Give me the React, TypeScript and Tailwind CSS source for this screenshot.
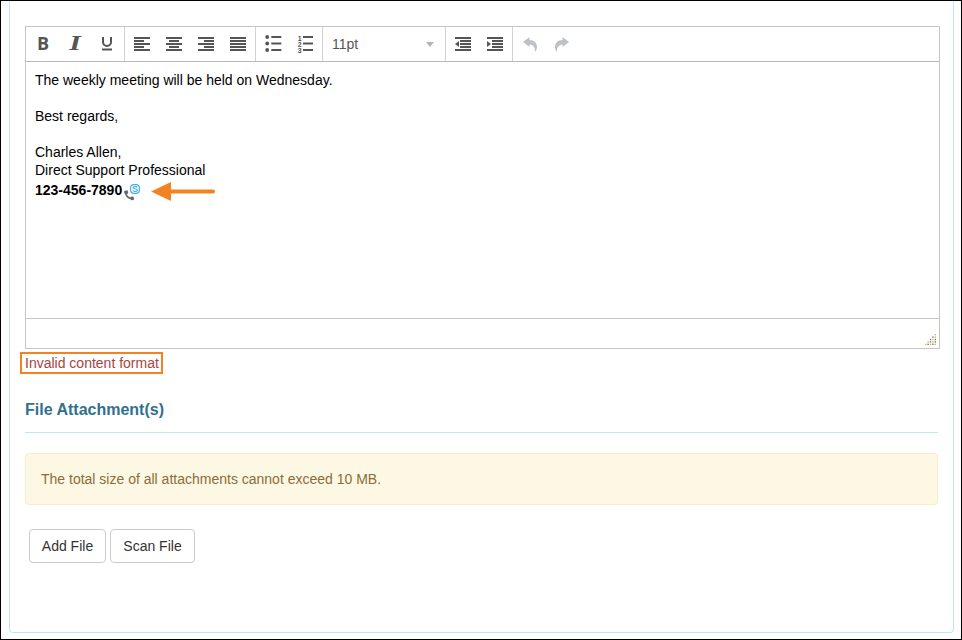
import React from "react";

const c = "#555555";
function Ico({ children }: { children: React.ReactNode }) {
  return (
    <div className="flex h-[34px] w-[32px] items-center justify-center">
      <svg width="20" height="20" viewBox="0 0 20 20" className="overflow-visible">{children}</svg>
    </div>
  );
}
function Lines({ rows }: { rows: [number, number, number][] }) {
  return (
    <>
      {rows.map(([x, y, w], i) => (
        <rect key={i} x={x} y={y} width={w} height="2" fill={c} />
      ))}
    </>
  );
}
function Group({ children }: { children: React.ReactNode }) {
  return <div className="flex px-px">{children}</div>;
}
const Sep = () => <div className="h-[34px] w-px bg-[#d0d0d0]" />;
const undo = "M3 8 9.5 3V6C14 6 17 9 17 13 17 15 16 17 15 18 15.5 14 13 10.5 9.5 10.5V13Z";

export default function App() {
  return (
    <div className="h-[640px] w-[962px] overflow-hidden border border-black bg-white font-['Liberation_Sans',Arial,sans-serif] text-sm text-black">
      <div className="ml-[8px] mr-[7px] h-[632px] rounded-b-[4px] border-x border-b border-[#bce8f1] pl-[15px] pr-[13px] pt-[25px]">
        <div className="w-[915px] border border-[#c5c5c5]">
          <div className="flex h-[35px] border-b border-[#b8b8b8]">
            <Group>
              <Ico><text x="10" y="16" textAnchor="middle" fontFamily="'Open Sans','Liberation Sans',sans-serif" fontWeight="700" fontSize="18" fill={c}>B</text></Ico>
              <Ico><text x="10" y="16" textAnchor="middle" fontFamily="'Liberation Serif',serif" fontStyle="italic" fontWeight="700" fontSize="20" fill={c} transform="matrix(1.5 0 0 1 -5 0)">I</text></Ico>
              <Ico>
                <path d="M6 3v5a4 4 0 0 0 8 0V3" fill="none" stroke={c} strokeWidth="2" />
                <rect x="5" y="14.5" width="10" height="2" fill={c} />
              </Ico>
            </Group>
            <Sep />
            <Group>
              <Ico><Lines rows={[[2, 3, 16], [2, 6, 10], [2, 9, 16], [2, 12, 10], [2, 15, 16]]} /></Ico>
              <Ico><Lines rows={[[2, 3, 16], [5, 6, 10], [2, 9, 16], [5, 12, 10], [2, 15, 16]]} /></Ico>
              <Ico><Lines rows={[[2, 3, 16], [8, 6, 10], [2, 9, 16], [8, 12, 10], [2, 15, 16]]} /></Ico>
              <Ico><Lines rows={[[2, 3, 16], [2, 6, 16], [2, 9, 16], [2, 12, 16], [2, 15, 16]]} /></Ico>
            </Group>
            <Sep />
            <Group>
              <Ico>
                <circle cx="4.2" cy="3" r="1.9" fill={c} /><circle cx="4.2" cy="9.5" r="1.9" fill={c} /><circle cx="4.2" cy="16" r="1.9" fill={c} />
                <Lines rows={[[8.3, 2, 10], [8.3, 8.5, 10], [8.3, 15, 10]]} />
              </Ico>
              <Ico>
                <text x="4.7" y="6.5" textAnchor="middle" fontSize="7" fontWeight="700" fill={c}>1</text>
                <text x="4.7" y="12.5" textAnchor="middle" fontSize="7" fontWeight="700" fill={c}>2</text>
                <text x="4.7" y="18.5" textAnchor="middle" fontSize="7" fontWeight="700" fill={c}>3</text>
                <Lines rows={[[8, 2, 10], [8, 8.5, 10], [8, 15, 10]]} />
              </Ico>
            </Group>
            <Sep />
            <div className="relative flex h-[34px] w-[122px] items-center pl-[9px] text-[#555555]">
              11pt
              <span className="absolute left-[103px] top-[15px] h-0 w-0 border-x-4 border-t-[5px] border-x-transparent border-t-[#b4b4b4]" />
            </div>
            <Sep />
            <Group>
              <Ico>
                <Lines rows={[[2, 3, 16], [7, 6, 11], [7, 9, 11], [7, 12, 11], [2, 15, 16]]} />
                <path d="M2 10 6 7v6z" fill={c} />
              </Ico>
              <Ico>
                <Lines rows={[[2, 3, 16], [7, 6, 11], [7, 9, 11], [7, 12, 11], [2, 15, 16]]} />
                <path d="M6 10 2 7v6z" fill={c} />
              </Ico>
            </Group>
            <Sep />
            <Group>
              <Ico><path d={undo} fill="#bcc2c6" /></Ico>
              <Ico><path d={undo} fill="#bcc2c6" transform="matrix(-1 0 0 1 20 0)" /></Ico>
            </Group>
          </div>
          <div className="h-[256px] px-[9px] pt-[9px] leading-[18px]">
            <p>The weekly meeting will be held on Wednesday.</p>
            <p className="mt-[18px]">Best regards,</p>
            <p className="mt-[18px]">Charles Allen,</p>
            <p>Direct Support Professional</p>
            <div className="mt-[2px] flex items-start font-bold">
              <span>123-456-7890</span>
              <svg width="17" height="18" viewBox="0 0 17 18" className="ml-px overflow-visible">
                <path d="M3 11C2 14 5 17.5 9 17.6" fill="none" stroke="#666666" strokeWidth="1.8" strokeLinecap="round" />
                <rect x="1.2" y="9.6" width="3.8" height="3.4" rx="1" fill="#666666" transform="rotate(-15 3 11)" />
                <rect x="7.4" y="15.6" width="3.4" height="3.6" rx="1" fill="#666666" transform="rotate(-15 9 17)" />
                <rect x="7.6" y="3.6" width="8.8" height="8.8" rx="3.4" fill="#ffffff" stroke="#3fb2e6" strokeWidth="1.2" />
                <text x="12" y="11.3" textAnchor="middle" fontSize="9" fontWeight="700" fill="#3fb2e6">S</text>
              </svg>
              <svg width="64" height="19" viewBox="0 0 64 19" className="ml-[11px] mt-px overflow-visible">
                <path d="M0 9.5 20 0V7.5H62A2 2 0 0 1 62 11.5H20V19Z" fill="#f58220" />
              </svg>
            </div>
          </div>
          <div className="relative h-[30px] border-t border-[#c5c5c5]">
            <svg width="12" height="12" viewBox="0 0 10 10" className="absolute bottom-[2px] right-[2px]">
              {[[8,0],[6,2],[8,2],[4,4],[6,4],[8,4],[2,6],[4,6],[6,6],[8,6],[0,8],[2,8],[4,8],[6,8],[8,8]].map(([x,y],i)=>(
                <rect key={i} x={x} y={y} width="1.2" height="1.2" fill={i%2?"#7a7f8a":"#d8b95a"} />
              ))}
            </svg>
          </div>
        </div>
        <div className="ml-[-5px] mt-[3px] flex h-[22px] w-[143px] items-center border-2 border-[#f58220] pl-[3px] text-[#a94442]">
          Invalid content format
        </div>
        <h4 className="mt-[26px] text-base font-bold leading-[20px] text-[#31708f]">File Attachment(s)</h4>
        <div className="mt-[12px] h-px w-[913px] bg-[#bce8f1]" />
        <div className="mt-[20px] flex h-[52px] w-[913px] items-center rounded-[4px] border border-[#faebcc] bg-[#fcf8e3] pl-[15px] text-[#8a6d3b]">
          The total size of all attachments cannot exceed 10 MB.
        </div>
        <div className="ml-[4px] mt-[24px] flex gap-[4px] text-[#333]">
          <button className="h-[34px] w-[77px] rounded-[4px] border border-[#ccc] bg-white">Add File</button>
          <button className="h-[34px] w-[85px] rounded-[4px] border border-[#ccc] bg-white">Scan File</button>
        </div>
      </div>
    </div>
  );
}
